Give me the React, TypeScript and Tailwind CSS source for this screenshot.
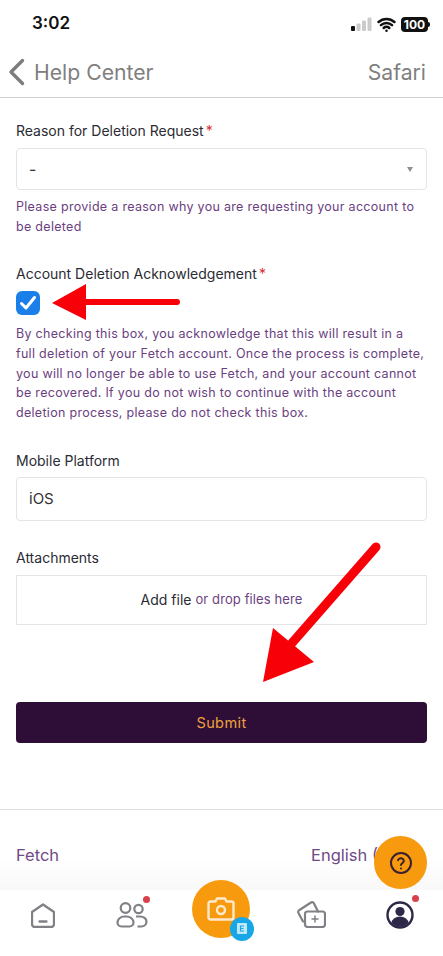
import { Wifi } from "lucide-react";

const purple = "text-[#6b3f80]";

const Label = ({ text, required }: { text: string; required?: boolean }) => (
  <div className="text-[14px] leading-[20px] text-[#2b2b33]">
    {text}
    {required && <span className="ml-[2px] text-[#d9303a]">*</span>}
  </div>
);

const RedArrows = () => (
  <svg className="absolute left-0 top-0 pointer-events-none" width="443" height="956" viewBox="0 0 443 956">
    <path d="M52 303 L86 284 L86 320 Z" fill="#f80008" />
    <path d="M84 302 H177" stroke="#f80008" strokeWidth="6" strokeLinecap="round" />
    <path d="M263 682 L273 628 L314 662 Z" fill="#f80008" />
    <path d="M292 643 L376 547" stroke="#f80008" strokeWidth="9" strokeLinecap="round" />
  </svg>
);

const StatusBar = () => (
  <div className="h-[46px] flex items-center justify-between pl-[32px] pr-[13px] pt-[2px]">
    <span className="text-[17px] font-semibold text-[#111]">3:02</span>
    <div className="flex items-center gap-[5px]">
      <svg width="21" height="14" viewBox="0 0 21 14">
        <rect x="0" y="9" width="4" height="5" rx="1" fill="#111" />
        <rect x="5.5" y="6.5" width="4" height="7.5" rx="1" fill="#cbcbcb" />
        <rect x="11" y="3.5" width="4" height="10.5" rx="1" fill="#cbcbcb" />
        <rect x="16.5" y="0.5" width="4" height="13.5" rx="1" fill="#cbcbcb" />
      </svg>
      <Wifi size={19} strokeWidth={3.2} className="text-[#111]" />
      <div className="flex items-center">
        <div className="w-[27px] h-[15px] rounded-[4px] bg-[#111] text-white text-[12px] font-bold leading-[15px] text-center">
          100
        </div>
        <div className="w-[2px] h-[5px] rounded-r-[2px] bg-[#111]" />
      </div>
    </div>
  </div>
);

const Header = () => (
  <div className="h-[52px] flex items-center justify-between pl-[8px] pr-[17px] border-b border-[#cfcfcf] pt-[2px]">
    <div className="flex items-center">
      <svg width="17" height="28" viewBox="0 0 17 28" fill="none" stroke="#7d7d7d" strokeWidth="3.4" strokeLinecap="round" strokeLinejoin="round">
        <path d="M14.5 2.5 L3 14 L14.5 25.5" />
      </svg>
      <span className="ml-[9px] text-[21.2px] text-[#808080]">Help Center</span>
    </div>
    <span className="text-[21.2px] text-[#808080]">Safari</span>
  </div>
);

const TabBar = () => (
  <div className="relative h-[66px] flex items-start bg-white">
    <div className="w-[85px] flex justify-center pt-[13px]">
      <svg width="24" height="25" viewBox="0 0 24 25" fill="none" stroke="#808086" strokeWidth="2.3" strokeLinejoin="round" strokeLinecap="round">
        <path d="M12 1.5 L23 9 V21 a3 3 0 0 1 -3 3 H4 a3 3 0 0 1 -3 -3 V9 Z" />
        <path d="M8.5 18.5 H15.5" />
      </svg>
    </div>
    <div className="relative w-[90px] flex justify-center pt-[12px] pl-[3px]">
      <svg width="32" height="26" viewBox="0 0 32 26" fill="none" stroke="#808086" strokeWidth="2.2">
        <circle cx="9.5" cy="6" r="4.8" />
        <circle cx="22.5" cy="7" r="4.2" />
        <path d="M1.5 20.5 a7 6 0 0 1 7 -6 h2 a7 6 0 0 1 7 6 a4 4 0 0 1 -4 4 H5.5 a4 4 0 0 1 -4 -4 Z" />
        <path d="M20 14.5 h4 a6.5 5 0 0 1 6.5 5 a5 5 0 0 1 -5 5 h-4" />
      </svg>
      <span className="absolute left-[58px] top-[6px] w-[7px] h-[7px] rounded-full bg-[#d9404a]" />
    </div>
    <div className="flex-1" />
    <div className="w-[92px] flex justify-center pt-[11px]">
      <svg width="29" height="27" viewBox="0 0 29 27" fill="none" stroke="#808086" strokeWidth="2.2" strokeLinejoin="round" strokeLinecap="round">
        <rect x="8" y="10.5" width="20" height="15.5" rx="2.5" />
        <path d="M6 20.5 L1.5 12 a2 2 0 0 1 1 -3 L14 1.5 a2 2 0 0 1 3 1 L21 10.5" />
        <path d="M18 15 v6 M15 18 h6" strokeWidth="1.5" />
      </svg>
    </div>
    <div className="relative w-[86px] flex justify-center pt-[11px]">
      <svg width="28" height="28" viewBox="0 0 28 28">
        <circle cx="14" cy="14" r="12.5" fill="none" stroke="#2d2748" strokeWidth="2.4" />
        <circle cx="14" cy="10.5" r="4.6" fill="#2d2748" />
        <path d="M5.5 22 a8.5 6.5 0 0 1 17 0 a12 12 0 0 1 -17 0 Z" fill="#2d2748" />
      </svg>
      <span className="absolute left-[55px] top-[5px] w-[7px] h-[7px] rounded-full bg-[#d9404a]" />
    </div>
    <div className="absolute left-[192px] top-[-10px] w-[58px] h-[58px] rounded-full bg-[#f89a0d] flex items-center justify-center">
      <svg width="28" height="24" viewBox="0 0 28 24" fill="none" stroke="#fdeacb" strokeWidth="2.4" strokeLinejoin="round">
        <path d="M3.5 4.5 H8.5 L10 1.5 H18 L19.5 4.5 H24.5 a2 2 0 0 1 2 2 V20.5 a2 2 0 0 1 -2 2 H3.5 a2 2 0 0 1 -2 -2 V6.5 a2 2 0 0 1 2 -2 Z" />
        <circle cx="14" cy="13" r="4" />
      </svg>
      <div className="absolute left-[38px] top-[37px] w-[24px] h-[24px] rounded-full bg-[#17a6e6] flex items-center justify-center">
        <svg width="12" height="13" viewBox="0 0 12 13">
          <rect x="1" y="1" width="10" height="11" rx="1" fill="#bfe8fa" />
          <path d="M8 4 H4.5 V9 H8 M4.5 6.5 H7.5" fill="none" stroke="#17a6e6" strokeWidth="1.2" />
        </svg>
      </div>
    </div>
  </div>
);

export default function App() {
  return (
    <div className="relative w-[443px] h-[956px] overflow-hidden bg-white font-['Inter',sans-serif]">
      <StatusBar />
      <Header />

      <div className="px-[16px] pt-[23px]">
        <Label text="Reason for Deletion Request" required />
        <div className="mt-[7px] h-[42px] flex items-center justify-between border border-[#e4e4e8] rounded-[4px] pl-[12px] pr-[13px]">
          <span className="text-[16px] text-[#333]">-</span>
          <span className="w-0 h-0 border-x-[3px] border-x-transparent border-t-[5px] border-t-[#8d8d92]" />
        </div>
        <p className={`mt-[7px] text-[12.5px] leading-[20px] tracking-[0.3px] ${purple}`}>
          Please provide a reason why you are requesting your account to be deleted
        </p>

        <div className="mt-[27px]">
          <Label text="Account Deletion Acknowledgement" required />
        </div>
        <div className="mt-[7px] w-[24px] h-[24px] rounded-[6px] bg-[#1a7fe8] flex items-center justify-center">
          <svg width="18" height="16" viewBox="0 0 18 16" fill="none" stroke="#fff" strokeWidth="3" strokeLinecap="round" strokeLinejoin="round">
            <path d="M2.5 8.5 L7 13 L15.5 2.5" />
          </svg>
        </div>
        <p className={`mt-[9px] text-[12.5px] leading-[19.8px] tracking-[0.3px] whitespace-nowrap ${purple}`}>
          By checking this box, you acknowledge that this will result in a
          <br />
          full deletion of your Fetch account. Once the process is complete,
          <br />
          you will no longer be able to use Fetch, and your account cannot
          <br />
          be recovered. If you do not wish to continue with the account
          <br />
          deletion process, please do not check this box.
        </p>

        <div className="mt-[28px]">
          <Label text="Mobile Platform" />
        </div>
        <div className="mt-[6px] h-[44px] flex items-center border border-[#e4e4e8] rounded-[4px] pl-[12px] text-[15px] text-[#333]">
          iOS
        </div>

        <div className="mt-[27px]">
          <Label text="Attachments" />
        </div>
        <div className="mt-[7px] h-[50px] flex items-center justify-center border border-[#e4e4e8] text-[14px] text-[#2b2b33]">
          Add file
          <span className={`ml-[4px] text-[13px] tracking-[0.1px] ${purple}`}>or drop files here</span>
        </div>

        <button type="button" className="mt-[77px] w-full h-[41px] rounded-[4px] bg-[#2e0e37] text-[14.5px] tracking-[0.4px] text-[#f0a03c]">
          Submit
        </button>
      </div>

      <div className="mt-[66px] border-t border-[#dedede] h-[81px] px-[16px] pt-[34px] flex justify-between bg-gradient-to-b from-white from-60% to-[#f8f8f8] text-[16.5px] leading-[22px] text-[#6f4a85]">
        <span>Fetch</span>
        <span className="whitespace-nowrap w-[116px] overflow-hidden">English (US)</span>
      </div>

      <TabBar />

      <div className="absolute left-[374px] top-[836px] w-[53px] h-[53px] rounded-full bg-[#f79a0e] flex items-center justify-center">
        <svg width="24" height="24" viewBox="0 0 24 24" fill="none" stroke="#3a2030" strokeWidth="2" strokeLinecap="round">
          <circle cx="12" cy="12" r="10" />
          <path d="M9 9.2 a3 3 0 0 1 5.8 0.8 c0 2 -2.8 2.4 -2.8 4" />
          <path d="M12 17.5 v0.1" />
        </svg>
      </div>

      <RedArrows />
    </div>
  );
}
